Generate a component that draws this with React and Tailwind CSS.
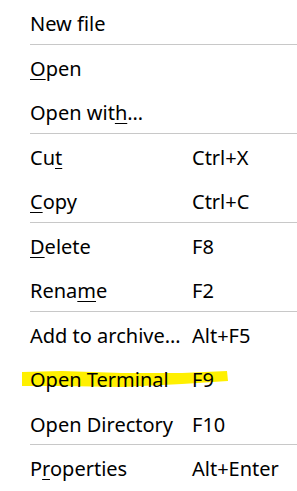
import React from "react";

const rows = [
  { label: "New file", sep: true },
  { label: "Open", key: 0 },
  { label: "Open with…", key: 8, sep: true },
  { label: "Cut", key: 2, shortcut: "Ctrl+X" },
  { label: "Copy", key: 0, shortcut: "Ctrl+C", sep: true },
  { label: "Delete", key: 0, shortcut: "F8" },
  { label: "Rename", key: 4, shortcut: "F2", sep: true },
  { label: "Add to archive…", shortcut: "Alt+F5" },
  { label: "Open Terminal", shortcut: "F9", marked: true },
  { label: "Open Directory", shortcut: "F10", sep: true },
  { label: "Properties", key: 1, shortcut: "Alt+Enter" },
];

const Label = ({ text, k }) => {
  if (k === undefined) return <span>{text}</span>;
  return (
    <span>
      {text.slice(0, k)}
      <span className="underline decoration-1 underline-offset-[3px]">{text[k]}</span>
      {text.slice(k + 1)}
    </span>
  );
};

const Marker = () => (
  <svg
    className="absolute left-[-8px] top-[14px] pointer-events-none"
    width="210"
    height="20"
    viewBox="0 0 210 20"
  >
    <path
      d="M0 2 L40 1 L100 3 L160 3 L205 1 L206 11 L160 14 L100 17 L40 16 L0 16 Z"
      fill="#fff000"
    />
  </svg>
);

export default function App() {
  return (
    <div
      className="w-[297px] h-[491px] bg-white text-black overflow-hidden"
      style={{ fontFamily: '"Noto Sans", "Open Sans", sans-serif' }}
    >
      {rows.map((r, i) => (
        <div
          key={i}
          className={`relative ml-[30px] h-[44.5px] grid grid-cols-[162px_1fr] pt-[13px] text-[20px] leading-[21px] ${
            r.sep ? "border-b border-[#c8c8c8]" : ""
          }`}
        >
          {r.marked && <Marker />}
          <div className="relative">
            <Label text={r.label} k={r.key} />
          </div>
          <div className="relative">{r.shortcut}</div>
        </div>
      ))}
    </div>
  );
}
